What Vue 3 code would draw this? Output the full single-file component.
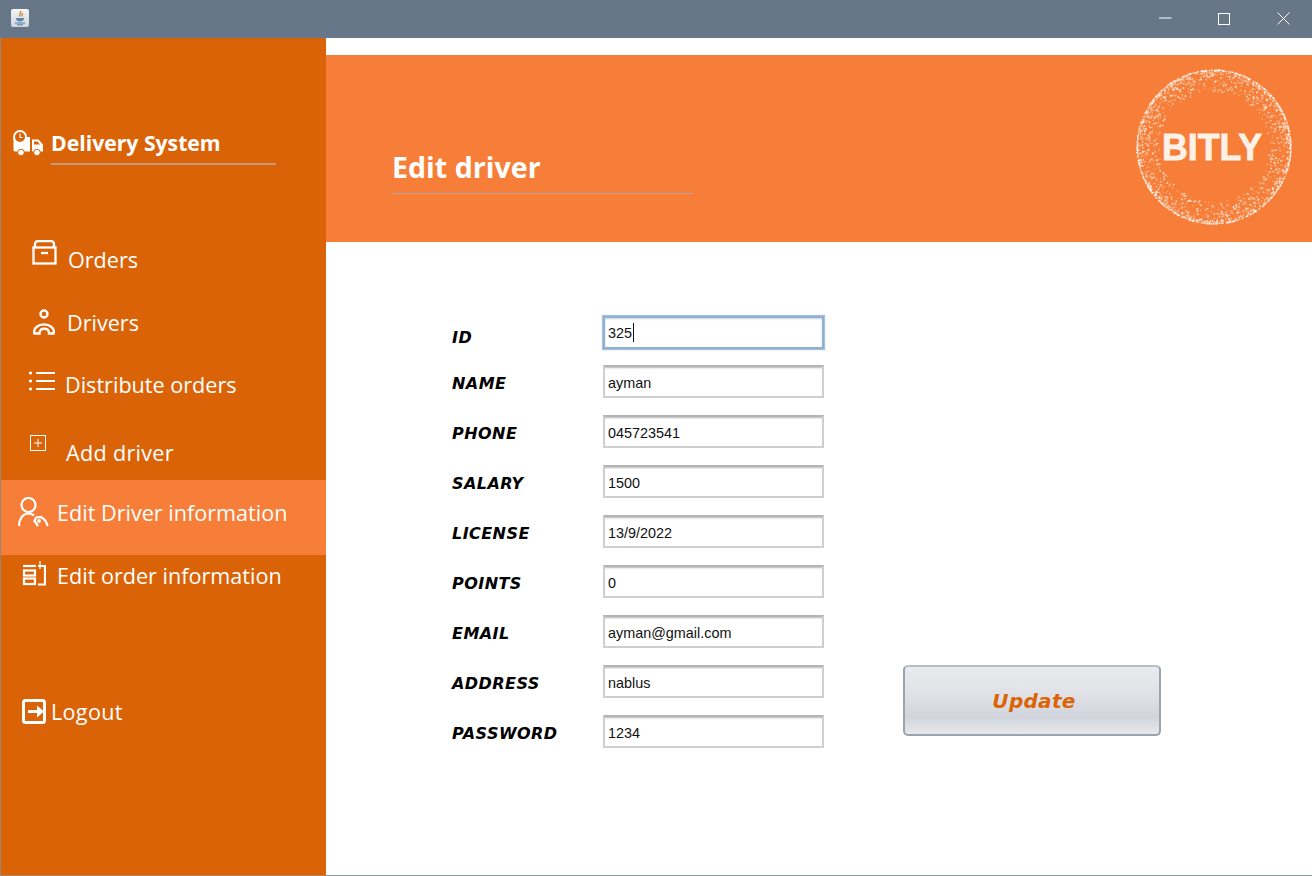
<script setup>
// seeded so the speckled logo ring comes out the same on every load
let seed = 42
const rnd = () => {
  seed = (seed * 16807) % 2147483647
  return seed / 2147483647
}

const specks = []
for (let i = 0; i < 2600; i++) {
  const a = rnd() * Math.PI * 2
  const depth = Math.pow(rnd(), 2.8) * 22
  const r = 77 - depth
  specks.push({
    id: i,
    x: (80 + Math.cos(a) * r).toFixed(2),
    y: (80 + Math.sin(a) * r).toFixed(2),
    r: (0.35 + rnd() * 0.7).toFixed(2),
    o: (0.3 + rnd() * 0.4).toFixed(2),
  })
}

const fields = [
  { label: 'ID', value: '325', active: true },
  { label: 'NAME', value: 'ayman' },
  { label: 'PHONE', value: '045723541' },
  { label: 'SALARY', value: '1500' },
  { label: 'LICENSE', value: '13/9/2022' },
  { label: 'POINTS', value: '0' },
  { label: 'EMAIL', value: 'ayman@gmail.com' },
  { label: 'ADDRESS', value: 'nablus' },
  { label: 'PASSWORD', value: '1234' },
]
</script>

<template>
  <div class="window">
    <header class="titlebar">
      <div class="app-icon">
        <svg width="18" height="18" viewBox="0 0 18 18">
          <path d="M9.500 2c1 2-2 3-.5 5.500M11.500 4c.5 1.500-1.500 2-.5 3.500" fill="none" stroke="#d9772b" stroke-width="1.300" />
          <path d="M5 9h8c0 2-1 3.500-4 3.500S5 11 5 9z" fill="#5d87a8" />
          <path d="M4 14h10M6 15.800h6" stroke="#4f7fa6" stroke-width="1" />
        </svg>
      </div>
      <div class="controls">
        <svg class="ctl-min" width="13" height="12" viewBox="0 0 13 12"><path d="M0 6h12.500" stroke="#fff" /></svg>
        <svg class="ctl-max" width="12" height="12" viewBox="0 0 12 12"><rect x=".5" y=".5" width="11" height="11" fill="none" stroke="#fff" /></svg>
        <svg class="ctl-close" width="13" height="13" viewBox="0 0 13 13"><path d="M.5.500l12 12M12.500.500l-12 12" stroke="#fff" /></svg>
      </div>
    </header>

    <div class="body">
      <aside class="sidebar">
        <div class="brand">
          <svg class="brand-icon" width="31" height="26" viewBox="0 0 31 26">
            <path d="M2 7h15v14.500H2a1.500 1.500 0 0 1-1.500-1.500V8.500z" fill="#fff" />
            <circle cx="7" cy="7" r="7" fill="#fff" />
            <circle cx="7" cy="7" r="5" fill="#db6307" />
            <path d="M7 3.500v4h2.500" fill="none" stroke="#fff" stroke-width="1.100" />
            <path d="M19 9.500h6.500l4.500 5v7H19z" fill="#fff" />
            <path d="M21 11.500h3.500l2.500 3h-6z" fill="#db6307" />
            <circle cx="8" cy="22.500" r="3.300" fill="#fff" stroke="#db6307" stroke-width="1" />
            <circle cx="24" cy="22.500" r="3.300" fill="#fff" stroke="#db6307" stroke-width="1" />
          </svg>
          <div class="brand-name">Delivery System</div>
        </div>

        <nav class="nav">
          <a class="nav-item item-orders">
            <svg class="icon" width="25" height="25" viewBox="0 0 25 25" fill="none" stroke="#fff" stroke-width="2.300">
              <path d="M3 8V4a3 3 0 0 1 3-3h13a3 3 0 0 1 3 3v4" />
              <rect x="1.500" y="7.500" width="22" height="16" />
              <path d="M9 13h7" />
            </svg>
            <span>Orders</span>
          </a>
          <a class="nav-item item-drivers">
            <svg class="icon" width="25" height="27" viewBox="0 0 25 27" fill="none" stroke="#fff" stroke-width="2.400">
              <circle cx="12" cy="5" r="3.500" />
              <path d="M2.500 24.500c-1-3 0-5 2-6.500 4-3.500 11-3.500 15 0 2 1.500 3 3.500 2 6.500h-4.500c0-2-.5-3-1.500-4-1.500-1-5-1-6.500 0-1 1-1.500 2-1.500 4z" />
            </svg>
            <span>Drivers</span>
          </a>
          <a class="nav-item item-distribute">
            <svg class="icon" width="26" height="20" viewBox="0 0 26 20" fill="none" stroke="#fff" stroke-width="2.200">
              <path d="M7 2h19M7 10h19M7 18h19" />
              <path d="M0 2h3M0 10h3M0 18h3" stroke-width="2.500" />
            </svg>
            <span>Distribute orders</span>
          </a>
          <a class="nav-item item-add">
            <svg class="icon" width="16" height="16" viewBox="0 0 16 16" fill="none" stroke="#fff" stroke-width="1">
              <rect x=".5" y=".5" width="15" height="15" />
              <path d="M4 8h8M8 4v8" />
            </svg>
            <span>Add driver</span>
          </a>
          <a class="nav-item item-edit-driver">
            <svg class="icon" width="33" height="30" viewBox="0 0 33 30" fill="none" stroke="#fff" stroke-width="2.200">
              <circle cx="11.500" cy="8" r="7" />
              <path d="M2 29c0-7 3.500-12 9-12.500 2.500 0 4.500.5 6 2" />
              <path d="M21 29l-3.500-5 1.500-3.500 5-.5c3 1.500 5.500 4.500 6.500 9" />
              <circle cx="22" cy="24" r=".8" />
            </svg>
            <span>Edit Driver information</span>
          </a>
          <a class="nav-item item-edit-order">
            <svg class="icon" width="24" height="25" viewBox="0 0 24 25" fill="none" stroke="#fff" stroke-width="2.200">
              <path d="M1 5h13" />
              <rect x="2" y="9.500" width="11" height="5" />
              <rect x="2" y="17.500" width="11" height="5.500" />
              <path d="M16 5h7v18.500h-7" />
              <path d="M18 0v8" stroke-width="1.200" />
            </svg>
            <span>Edit order information</span>
          </a>
          <a class="nav-item item-logout">
            <svg class="icon" width="24" height="25" viewBox="0 0 24 25" fill="none" stroke="#fff">
              <rect x="1.500" y="1.500" width="21" height="22" rx="2" stroke-width="3" />
              <path d="M6 12.500h11" stroke-width="3" />
              <path d="M15 6.500l7 6-7 6z" fill="#fff" stroke="none" />
            </svg>
            <span>Logout</span>
          </a>
        </nav>
      </aside>

      <main class="main">
        <section class="banner">
          <div class="heading">
            <h1>Edit driver</h1>
          </div>
          <svg class="logo" width="160" height="160" viewBox="0 0 160 160">
            <circle v-for="s in specks" :key="s.id" :cx="s.x" :cy="s.y" :r="s.r" fill="#fff" :opacity="s.o" />
            <text x="78" y="93" text-anchor="middle" class="logo-text" textLength="100" lengthAdjust="spacingAndGlyphs">BITLY</text>
          </svg>
        </section>

        <section class="content">
          <div class="form">
            <div v-for="f in fields" :key="f.label" class="row" :class="{ 'row-first': f.active }">
              <label>{{ f.label }}</label>
              <div class="field" :class="{ focused: f.active }">
                <input type="text" :value="f.value" readonly />
                <i v-if="f.active" class="caret"></i>
              </div>
            </div>
          </div>
          <button class="update" type="button">Update</button>
        </section>
      </main>
    </div>
  </div>
</template>

<style>
html,
body {
  margin: 0;
  background: #fff;
}
</style>

<style scoped>
.window {
  width: 1312px;
  height: 876px;
  display: flex;
  flex-direction: column;
  overflow: hidden;
  font-family: "Open Sans", "Noto Sans", sans-serif;
}

.titlebar {
  height: 38px;
  flex: none;
  background: #677689;
  display: flex;
  align-items: center;
  justify-content: space-between;
  padding-left: 11px;
}

.app-icon {
  width: 18px;
  height: 18px;
  margin-bottom: 2px;
  background: linear-gradient(#f4f6f8, #ccd5dd);
  border-radius: 2px;
}

.controls {
  display: flex;
  align-items: center;
  height: 100%;
}

.ctl-min {
  margin-right: 46px;
  margin-bottom: 2px;
}

.ctl-max {
  margin-right: 47px;
  margin-bottom: 1px;
}

.ctl-close {
  margin-right: 22px;
  margin-bottom: 1px;
}

.body {
  flex: 1;
  display: flex;
  min-height: 0;
}

.sidebar {
  width: 325px;
  flex: none;
  background: #db6307;
  border-left: 1px solid #9a8676;
  border-bottom: 1px solid #b5845c;
  color: #fff;
}

.brand {
  height: 40px;
  margin-top: 85px;
  padding-left: 12px;
  display: flex;
  align-items: center;
}

.brand-icon {
  flex: none;
}

.brand-name {
  margin-left: 7px;
  width: 225px;
  height: 38px;
  line-height: 36px;
  margin-top: 3px;
  font-size: 21.2px;
  font-weight: 700;
  border-bottom: 2px solid #c69a78;
  white-space: nowrap;
}

.nav {
  margin-top: 65px;
  display: flex;
  flex-direction: column;
}

.nav-item {
  display: flex;
  align-items: center;
  box-sizing: border-box;
  font-size: 21.6px;
  white-space: nowrap;
  color: #fff;
}

.icon {
  flex: none;
}

.item-orders {
  height: 62px;
  padding-left: 31px;
}
.item-orders .icon {
  margin-right: 11px;
  margin-bottom: 13px;
}

.item-drivers {
  height: 64px;
  padding-left: 31px;
}
.item-drivers .icon {
  margin-right: 10px;
}

.item-distribute {
  height: 60px;
  padding-left: 28px;
}
.item-distribute .icon {
  margin-right: 10px;
  margin-bottom: 6px;
}

.item-add {
  height: 66px;
  padding-left: 29px;
  padding-top: 10px;
  letter-spacing: 0.3px;
}
.item-add .icon {
  margin-right: 20px;
  margin-bottom: 18px;
}

.item-edit-driver {
  height: 75px;
  padding-left: 16px;
  padding-bottom: 11px;
  background: #f67e38;
}
.item-edit-driver .icon {
  margin-right: 7px;
}

.item-edit-order {
  height: 40px;
  padding-left: 21px;
}
.item-edit-order .icon {
  margin-right: 11px;
  margin-bottom: 4px;
}

.item-logout {
  height: 42px;
  margin-top: 95px;
  padding-left: 21px;
  letter-spacing: 0.3px;
}
.item-logout .icon {
  margin-right: 5px;
}

.main {
  flex: 1;
  min-width: 0;
  background: #fff;
  padding-top: 17px;
  border-bottom: 1px solid #8d97a3;
  display: flex;
  flex-direction: column;
}

.banner {
  height: 187px;
  flex: none;
  background: #f67e38;
  display: flex;
  align-items: center;
  justify-content: space-between;
  padding: 0 18px 3px 66px;
  box-sizing: border-box;
}

.heading {
  width: 301px;
  margin-top: 42px;
  border-bottom: 1px solid #b8a597;
}

.heading h1 {
  margin: 0;
  padding: 2px 0 4px;
  color: #fff;
  font-size: 28.6px;
  font-weight: 700;
  line-height: 44px;
}

.logo-text {
  fill: #fdf1e8;
  stroke: #fdf1e8;
  stroke-width: 0.8;
  font-family: "Liberation Sans", Arial, sans-serif;
  font-size: 37px;
  font-weight: 700;
}

.content {
  flex: 1;
  display: flex;
  align-items: flex-start;
  padding: 74px 0 0 126px;
}

.form {
  display: flex;
  flex-direction: column;
  gap: 17px;
  width: 372px;
}

.row {
  display: flex;
  align-items: center;
  height: 33px;
}

.row-first {
  margin-bottom: -1px;
}

.row label {
  width: 151px;
  flex: none;
  padding-top: 4px;
  color: #000;
  font-family: "DejaVu Sans", Verdana, sans-serif;
  font-size: 16px;
  font-weight: 700;
  font-style: italic;
  letter-spacing: 0.45px;
}

.row-first label {
  padding-top: 10px;
}

.field {
  position: relative;
  width: 221px;
  height: 33px;
}

.field input {
  width: 100%;
  height: 100%;
  box-sizing: border-box;
  padding: 2px 3px 0;
  border: 2px solid #cfcfcf;
  border-top-color: #b4b4b4;
  outline: none;
  background: #fff;
  box-shadow: inset 0 2px 2px -1px #b8b8b8;
  color: #111;
  font-family: "Liberation Sans", Arial, sans-serif;
  font-size: 14.4px;
}

.field.focused input {
  padding-top: 0;
  border-color: #8fb0d2;
  box-shadow: 0 0 1px 1px #a9c2dc, inset 0 1px 2px #c8d4e0;
}

.caret {
  position: absolute;
  left: 30px;
  top: 7px;
  width: 1px;
  height: 19px;
  background: #111;
}

.update {
  width: 258px;
  height: 71px;
  margin: 349px 0 0 79px;
  flex: none;
  border: 2px solid #9aa3ae;
  border-top-color: #b9bec5;
  border-radius: 5px;
  background: linear-gradient(#e9eaee, #e0e2e7 40%, #d2d5dc 75%, #e6e8ec);
  color: #dc6408;
  font-family: "DejaVu Sans", Verdana, sans-serif;
  font-size: 20px;
  font-weight: 700;
  font-style: italic;
  letter-spacing: 0.3px;
  padding: 0 0 0 4px;
}
</style>
